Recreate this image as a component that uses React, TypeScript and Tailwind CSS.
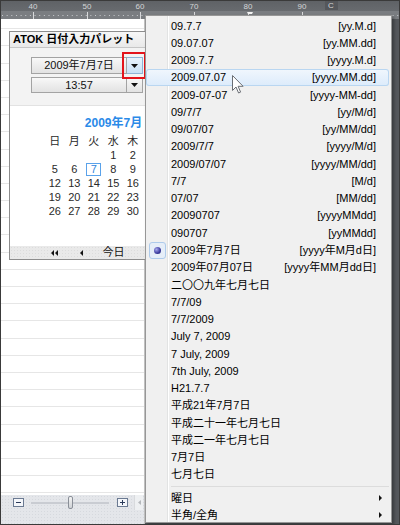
import React from 'react';

const FONT = "font-['Liberation_Sans','Noto_Sans_CJK_JP',sans-serif]";

const formats: [string, string?][] = [
    ['09.7.7', '[yy.M.d]'],
    ['09.07.07', '[yy.MM.dd]'],
    ['2009.7.7', '[yyyy.M.d]'],
    ['2009.07.07', '[yyyy.MM.dd]'],
    ['2009-07-07', '[yyyy-MM-dd]'],
    ['09/7/7', '[yy/M/d]'],
    ['09/07/07', '[yy/MM/dd]'],
    ['2009/7/7', '[yyyy/M/d]'],
    ['2009/07/07', '[yyyy/MM/dd]'],
    ['7/7', '[M/d]'],
    ['07/07', '[MM/dd]'],
    ['20090707', '[yyyyMMdd]'],
    ['090707', '[yyMMdd]'],
    ['2009年7月7日', '[yyyy年M月d日]'],
    ['2009年07月07日', '[yyyy年MM月dd日]'],
    ['二〇〇九年七月七日'],
    ['7/7/09'],
    ['7/7/2009'],
    ['July 7, 2009'],
    ['7 July, 2009'],
    ['7th July, 2009'],
    ['H21.7.7'],
    ['平成21年7月7日'],
    ['平成二十一年七月七日'],
    ['平成二一年七月七日'],
    ['7月7日'],
    ['七月七日'],
];

const HOVER = 3;
const CHECKED = 13;

// only 日〜木 are visible, the rest sits under the menu
const weeks: (number | null)[][] = [
    [null, null, null, 1, 2],
    [5, 6, 7, 8, 9],
    [12, 13, 14, 15, 16],
    [19, 20, 21, 22, 23],
    [26, 27, 28, 29, 30],
];

const DownArrow = () => (
    <svg width="7" height="4" viewBox="0 0 7 4">
        <path d="M0 0h7L3.5 4z" fill="#111" />
    </svg>
);

const Ruler = () => {
    const labels = [
        { n: '40', x: 33 },
        { n: '50', x: 87 },
        { n: '60', x: 140 },
        { n: '70', x: 194 },
        { n: '80', x: 248 },
        { n: '90', x: 302 },
    ];
    const dots = Array.from({ length: 86 }, (_, i) => 1 + i * 4.65);
    return (
        <div className="relative h-[18px] shrink-0 bg-gradient-to-b from-[#5f6266] to-[#6f7276]">
            <svg className="absolute left-0 top-0" width="398" height="18">
                <rect x="0" y="10" width="398" height="8" fill="#7a7d81" />
                {dots.map((x) => (
                    <rect key={x} x={x} y="14" width="1" height="1" fill="#c9cbce" />
                ))}
                {labels.map((l) => (
                    <rect key={l.n} x={l.x - 1} y="11" width="1" height="7" fill="#d8d9db" />
                ))}
                <rect x="324" y="0" width="13" height="9" fill="#55575b" />
                <path d="M246 11h6l-1 2h-4z" fill="#f2f2f2" />
            </svg>
            {labels.map((l) => (
                <span
                    key={l.n}
                    className="absolute top-[1px] -translate-x-1/2 text-[8px] leading-[9px] text-[#d4d5d7]"
                    style={{ left: l.x - 1 }}
                >
                    {l.n}
                </span>
            ))}
            <span className="absolute left-[327px] top-0 text-[8px] leading-[9px] text-[#d4d5d7]">C</span>
        </div>
    );
};

const Palette = () => (
    <div className="absolute left-[8px] top-[12px] w-[137px] overflow-hidden border border-[#8d8d8d] bg-[#f3f3f3] z-10">
        <div className="h-[16px] flex items-center pl-[3px] bg-gradient-to-b from-[#f7f7f7] to-[#e9e9e9] border-b border-[#c6c6c6] text-[11px] font-bold text-black leading-none whitespace-nowrap">
            ATOK 日付入力パレット
        </div>
        <div className="h-[57px] pt-[9px] pl-[21px] flex flex-col gap-[3px]">
            <div className="relative flex h-[17px]">
                <div className="w-[96px] shrink-0 flex items-center justify-center border border-[#a3a3a3] bg-gradient-to-b from-[#f8f8f8] to-[#e2e2e2] text-[11px] text-[#111] leading-none">
                    2009年7月7日
                </div>
                <div className="w-[16px] shrink-0 flex items-center justify-center border border-l-0 border-[#8fb4d6] bg-gradient-to-b from-[#e8f3fc] to-[#c9e1f5]">
                    <DownArrow />
                </div>
                <div className="absolute left-[91px] top-[-5px] w-[24px] h-[27px] border-2 border-[#e3141b]" />
            </div>
            <div className="flex h-[16px]">
                <div className="w-[96px] shrink-0 flex items-center justify-center border border-[#a3a3a3] bg-gradient-to-b from-[#f8f8f8] to-[#e2e2e2] text-[11px] text-[#111] leading-none">
                    13:57
                </div>
                <div className="w-[16px] shrink-0 flex items-center justify-center border border-l-0 border-[#a3a3a3] bg-gradient-to-b from-[#f8f8f8] to-[#e2e2e2]">
                    <DownArrow />
                </div>
            </div>
        </div>
        <div className="h-[141px] bg-white border-t border-[#e2e2e2] pt-[9px] pl-[35px]">
            <div className="w-[137px] shrink-0">
                <div className="h-[16px] flex items-center justify-center text-[12px] font-bold text-[#2b8ae8] leading-none whitespace-nowrap">
                    2009年7月
                </div>
                <div className="mt-[3px] w-[97.5px] grid grid-cols-5 text-[11px] text-[#2a2a2a] leading-none">
                    {['日', '月', '火', '水', '木'].map((d) => (
                        <div key={d} className="h-[14px] flex items-center justify-center">
                            {d}
                        </div>
                    ))}
                    {weeks.flat().map((d, i) => (
                        <div key={i} className="h-[14px] flex items-center justify-center">
                            {d === 7 ? (
                                <span className="w-[15px] h-[13px] flex items-center justify-center border border-[#5aa2ea] text-[#2f86dd]">
                                    7
                                </span>
                            ) : (
                                d
                            )}
                        </div>
                    ))}
                </div>
            </div>
        </div>
        <div className="h-[13px] pl-[35px] bg-[#e9e9e9] bg-[radial-gradient(#dcdcdc_0.6px,transparent_0.7px)] bg-[length:3px_3px]">
            <div className="w-[137px] h-full flex items-center text-[11px] leading-none text-[#111]">
                <div className="w-[19.5px] flex justify-center">
                    <svg width="7" height="6" viewBox="0 0 7 6"><path d="M3 0v6L0 3zM7 0v6L4 3z" fill="#111" /></svg>
                </div>
                <div className="w-[33px] flex justify-center">
                    <svg width="3" height="6" viewBox="0 0 3 6"><path d="M3 0v6L0 3z" fill="#111" /></svg>
                </div>
                <div className="w-[32px] flex justify-center whitespace-nowrap">今日</div>
            </div>
        </div>
    </div>
);

const BottomBar = () => (
    <div className="h-[29px] shrink-0 bg-[#e4e6ea] bg-[radial-gradient(#d6d9de_0.6px,transparent_0.7px)] bg-[length:3px_3px]">
        <div className="h-[15px] flex items-center">
            <div className="ml-[12px] w-[11px] h-[9px] border border-[#6b7a92] bg-[#f4f6fa] flex items-center justify-center">
                <div className="w-[5px] h-[1px] bg-[#2a3a5a]" />
            </div>
            <div className="relative ml-[7px] w-[78px] h-[2px] bg-[#c9ccd2]">
                <div className="absolute left-[37px] top-[-6px] w-[5px] h-[13px] rounded-[2px] border border-[#8a8f98] bg-gradient-to-b from-[#f4f4f4] to-[#cfd2d6]" />
            </div>
            <div className="ml-[8px] w-[11px] h-[9px] border border-[#6b7a92] bg-[#f4f6fa] flex items-center justify-center relative">
                <div className="w-[5px] h-[1px] bg-[#2a3a5a]" />
                <div className="absolute w-[1px] h-[5px] bg-[#2a3a5a]" />
            </div>
            <div className="ml-[6px] w-[9px] h-[15px] bg-[#eef0f2] border-l border-[#d8dadd] flex items-center justify-center">
                <svg width="3" height="5" viewBox="0 0 3 5"><path d="M3 0v5L0 2.5z" fill="#b5b8bc" /></svg>
            </div>
        </div>
    </div>
);

const Menu = () => (
    <div className="absolute left-[144px] top-[14px] w-[247px] bottom-[1px] z-20 border border-[#979797] bg-[#f0f0f0] shadow-[2px_2px_3px_rgba(0,0,0,0.35)] pt-[1.4px] text-[11px] text-black leading-none">
        <div className="absolute left-[21px] top-0 bottom-0 w-[1px] bg-[#e2e3e3]" />
        <div className="absolute left-[22px] top-0 bottom-0 w-[1px] bg-white" />
        {formats.map(([label, fmt], i) => (
            <div
                key={label}
                className={
                    'relative h-[17.27px] mr-[2px] flex items-center rounded-[3px] ' +
                    (i === HOVER
                        ? 'bg-gradient-to-b from-[#f1f7fd] to-[#dcebfb] shadow-[inset_0_0_0_1px_#b9d6f1]'
                        : '')
                }
            >
                <div className="w-[21px] h-full flex items-center justify-center">
                    {i === CHECKED && (
                        <div className="ml-[1px] w-[17px] h-[17px] rounded-[3px] border border-[#aecbeb] bg-[#e6eef8] flex items-center justify-center">
                            <div className="w-[7px] h-[7px] rounded-full bg-[radial-gradient(circle_at_35%_35%,#a9a9ee,#3b3b9e_60%,#25256e)]" />
                        </div>
                    )}
                </div>
                <span className="pl-[4px] flex-1 whitespace-nowrap">{label}</span>
                {fmt && <span className="pr-[13px] whitespace-nowrap">{fmt}</span>}
            </div>
        ))}
        <div className="h-[6px] flex items-center pl-[25px] pr-[2px]">
            <div className="w-full h-[1px] bg-[#dcdcdc]" />
        </div>
        {['曜日', '半角/全角'].map((label) => (
            <div key={label} className="h-[17.27px] mr-[2px] flex items-center">
                <div className="w-[21px]" />
                <span className="pl-[4px] flex-1">{label}</span>
                <svg className="mr-[7px]" width="3" height="6" viewBox="0 0 3 6">
                    <path d="M0 0v6l3-3z" fill="#111" />
                </svg>
            </div>
        ))}
    </div>
);

const Cursor = () => (
    <svg className="absolute left-[231px] top-[74px] z-30" width="12" height="19" viewBox="0 0 12 19">
        <path d="M0.5 0.5v15l3.5-3.5 2.6 6 2-0.9-2.5-5.8h5z" fill="#fff" stroke="#6a6e74" strokeWidth="1" />
    </svg>
);

export default function App() {
    return (
        <div className={`w-[400px] h-[525px] relative overflow-hidden flex flex-col border border-[#3a3a3a] bg-[#54575b] ${FONT}`}>
            <Ruler />
            <div className="flex-1 min-h-0 flex">
                <div className="relative w-[144px] shrink-0 flex flex-col bg-white border-r border-[#c4c4c4]">
                    <div className="flex-1 min-h-0 overflow-hidden">
                        <div className="h-[10.2px] border-b border-[#e6e6e6]" />
                        {Array.from({ length: 28 }, (_, i) => (
                            <div key={i} className="h-[17.2px] border-b border-[#e6e6e6]" />
                        ))}
                    </div>
                    <BottomBar />
                    <Palette />
                </div>
                <div className="flex-1 bg-[#55585c]" />
            </div>
            <Menu />
            <Cursor />
        </div>
    );
}
